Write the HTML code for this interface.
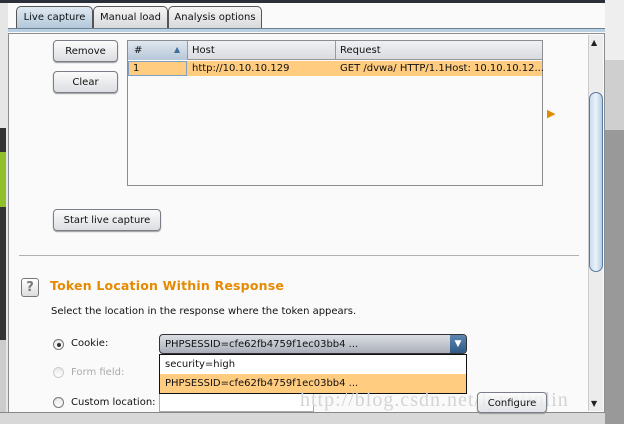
<!DOCTYPE html>
<html><head><meta charset="utf-8"><style>
*{box-sizing:border-box}
body{margin:0;width:624px;height:424px;overflow:hidden;background:#fafafa;font-family:"DejaVu Sans","Liberation Sans",sans-serif;font-size:10px;color:#111;position:relative}
.a{position:absolute}
.btn{position:absolute;border:1px solid #7a7e86;border-radius:4px;background:linear-gradient(#fbfbfb,#dcdee2);text-align:center;font-size:10px;line-height:21px;box-shadow:0 1px 1px #999}
.tab{position:absolute;top:6px;height:22px;border:1px solid #555;border-bottom:none;border-radius:5px 5px 0 0;background:linear-gradient(#f6f6f6,#d8d9dc);font-size:10px;line-height:22px;text-align:center}
.rad{position:absolute;width:11px;height:11px;border-radius:50%;border:1px solid #777;background:linear-gradient(#e8e8e8,#fff)}
</style></head><body>
<div class="a" style="left:0;top:0;width:8px;height:424px;background:#e6e6e6"></div>
<div class="a" style="left:0;top:128px;width:6px;height:296px;background:#333"></div>
<div class="a" style="left:0;top:152px;width:6px;height:55px;background:#8fbf2a"></div>
<div class="a" style="left:0;top:340px;width:6px;height:84px;background:#ccc"></div>
<div class="a" style="left:605px;top:0;width:19px;height:424px;background:#cfcfcf"></div>
<div class="a" style="left:605px;top:130px;width:19px;height:294px;background:#999"></div>
<div class="a" style="left:605px;top:0;width:19px;height:60px;background:#eee"></div>
<div class="a" style="left:0;top:0;width:605px;height:3px;background:#2b2f3a"></div>
<div class="a" style="left:8px;top:3px;width:597px;height:26px;background:#fafafa"></div>
<div class="a" style="left:8px;top:28px;width:597px;height:4px;background:#b9cfe2;border-top:1px solid #6e7f90"></div>
<div class="tab" style="left:16px;width:77px;background:linear-gradient(#dfe9f2,#b3c8da)">Live capture</div>
<div class="tab" style="left:93px;width:75px">Manual load</div>
<div class="tab" style="left:168px;width:94px">Analysis options</div>
<div class="a" style="left:8px;top:33px;width:597px;height:380px;border:1px solid #8a8d92;background:#fafafa"></div>
<div class="a" style="left:0;top:412px;width:605px;height:12px;background:#d8d8d8;border-top:1px solid #888"></div>
<div class="a" style="left:588px;top:35px;width:15px;height:376px;background:#ececec;border-left:1px solid #ccc"></div>
<div class="a" style="left:591px;top:38px;font-size:8px;color:#222">▲</div>
<div class="a" style="left:589px;top:92px;width:14px;height:180px;border:1px solid #5a7a9c;border-radius:7px;background:linear-gradient(90deg,#c9dcee,#eaf2fa,#b5cde3)"></div>
<div class="a" style="left:591px;top:399px;font-size:8px;color:#222">▼</div>
<div class="btn" style="left:53px;top:40px;width:65px;height:22px">Remove</div>
<div class="btn" style="left:53px;top:71px;width:65px;height:22px">Clear</div>
<div class="a" style="left:127px;top:40px;width:416px;height:146px;border:1px solid #8a8d92;background:#fafafa"></div>
<div class="a" style="left:128px;top:41px;width:414px;height:19px;background:linear-gradient(#f0f1f3,#d9dbe0);border-bottom:1px solid #999"></div>
<div class="a" style="left:128px;top:41px;width:59px;height:19px;background:linear-gradient(#dfe7ef,#b7c7d8)"></div>
<div class="a" style="left:187px;top:41px;width:1px;height:19px;background:#999"></div>
<div class="a" style="left:335px;top:41px;width:1px;height:19px;background:#999"></div>
<div class="a" style="left:134px;top:45px">#</div>
<div class="a" style="left:174px;top:45px;color:#3d6e9e;font-size:8px">▲</div>
<div class="a" style="left:192px;top:45px">Host</div>
<div class="a" style="left:340px;top:45px">Request</div>
<div class="a" style="left:128px;top:61px;width:414px;height:15px;background:#ffcc80"></div>
<div class="a" style="left:128px;top:61px;width:59px;height:15px;border:1px solid #7ea0c4"></div>
<div class="a" style="left:133px;top:63px">1</div>
<div class="a" style="left:192px;top:63px">http://10.10.10.129</div>
<div class="a" style="left:340px;top:63px">GET /dvwa/ HTTP/1.1Host: 10.10.10.12...</div>
<div class="a" style="left:547px;top:107px;color:#e08a00;font-size:11px">▶</div>
<div class="btn" style="left:53px;top:209px;width:108px;height:22px">Start live capture</div>
<div class="a" style="left:19px;top:255px;width:560px;height:1px;background:#b0b0b0"></div>
<div class="a" style="left:21px;top:278px;width:18px;height:19px;border:1px solid #777;border-radius:3px;background:linear-gradient(#fff,#ddd);text-align:center;font-size:13px;font-weight:bold;color:#777;line-height:17px">?</div>
<div class="a" style="left:50px;top:278px;font-size:12.5px;font-weight:bold;color:#e58a00;letter-spacing:0.2px">Token Location Within Response</div>
<div class="a" style="left:51px;top:306px">Select the location in the response where the token appears.</div>
<div class="rad" style="left:53px;top:339px"><div class="a" style="left:3px;top:3px;width:4px;height:4px;border-radius:50%;background:#333"></div></div>
<div class="a" style="left:71px;top:338px">Cookie:</div>
<div class="rad" style="left:53px;top:367px;border-color:#ccc"></div>
<div class="a" style="left:71px;top:367px;color:#aaa">Form field:</div>
<div class="rad" style="left:53px;top:397px"></div>
<div class="a" style="left:71px;top:397px">Custom location:</div>
<div class="a" style="left:159px;top:334px;width:308px;height:20px;border:1px solid #333;border-radius:4px;background:linear-gradient(#dcdfe5,#a9aeb8)"></div>
<div class="a" style="left:165px;top:339px">PHPSESSID=cfe62fb4759f1ec03bb4 ...</div>
<div class="a" style="left:450px;top:335px;width:16px;height:18px;background:linear-gradient(#5d86b0,#2f5a86);border-radius:0 3px 3px 0;color:#fff;font-size:9px;text-align:center;line-height:18px">▼</div>
<div class="a" style="left:159px;top:354px;width:308px;height:40px;border:1px solid #111;background:#fff"></div>
<div class="a" style="left:160px;top:374px;width:306px;height:19px;background:#ffcc80"></div>
<div class="a" style="left:165px;top:359px">security=high</div>
<div class="a" style="left:165px;top:378px">PHPSESSID=cfe62fb4759f1ec03bb4 ...</div>
<div class="a" style="left:159px;top:394px;width:155px;height:18px;border:1px solid #aaa;border-top:none;background:#fff"></div>
<div class="a" style="left:300px;top:389px;font-family:'Liberation Serif',serif;font-size:20px;color:#d4d4d4;letter-spacing:1px">http://blog.csdn.net/lynnlinlin</div>
<div class="btn" style="left:477px;top:392px;width:70px;height:21px;line-height:21px;background:linear-gradient(rgba(252,252,252,.8),rgba(220,222,226,.8))">Configure</div>
</body></html>
